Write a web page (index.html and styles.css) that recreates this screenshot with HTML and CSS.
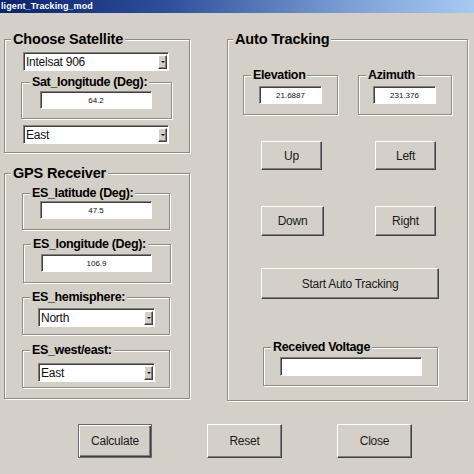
FILE: index.html
```html
<!DOCTYPE html>
<html>
<head>
<meta charset="utf-8">
<link rel="stylesheet" href="styles.css">
</head>
<body>
<div class="titlebar"><span class="title-text">ligent_Tracking_mod</span></div>
<div class="main">
  <div class="col-left">
    <fieldset class="group g-sat">
      <legend class="lg-big lg-left">Choose Satellite</legend>
      <div class="combo c-sat1"><span class="combo-text">Intelsat 906</span><span class="combo-btn"><i class="arrow"></i></span></div>
      <fieldset class="sub sub-satlon">
        <legend class="lg-sm lg-satlon">Sat_longitude (Deg):</legend>
        <div class="edit e-satlon">64.2</div>
      </fieldset>
      <div class="combo c-sat2"><span class="combo-text">East</span><span class="combo-btn"><i class="arrow"></i></span></div>
    </fieldset>
    <fieldset class="group g-gps">
      <legend class="lg-big lg-left">GPS Receiver</legend>
      <fieldset class="sub sub-lat">
        <legend class="lg-sm lg-es">ES_latitude (Deg):</legend>
        <div class="edit e-lat">47.5</div>
      </fieldset>
      <fieldset class="sub sub-lon">
        <legend class="lg-sm lg-es">ES_longitude (Deg):</legend>
        <div class="edit e-lon">106.9</div>
      </fieldset>
      <fieldset class="sub sub-hem">
        <legend class="lg-sm lg-es">ES_hemisphere:</legend>
        <div class="combo c-es c-hem"><span class="combo-text">North</span><span class="combo-btn"><i class="arrow"></i></span></div>
      </fieldset>
      <fieldset class="sub sub-we">
        <legend class="lg-sm lg-es">ES_west/east:</legend>
        <div class="combo c-es c-we"><span class="combo-text">East</span><span class="combo-btn"><i class="arrow"></i></span></div>
      </fieldset>
    </fieldset>
  </div>
  <div class="col-right">
    <fieldset class="group g-auto">
      <legend class="lg-big lg-auto">Auto Tracking</legend>
      <div class="ae-row">
        <fieldset class="sub sub-elev">
          <legend class="lg-sm lg-ae">Elevation</legend>
          <div class="edit e-ang e-elev">21.6887</div>
        </fieldset>
        <fieldset class="sub sub-azim">
          <legend class="lg-sm lg-ae">Azimuth</legend>
          <div class="edit e-ang e-azim">231.376</div>
        </fieldset>
      </div>
      <div class="btn-row row1">
        <div class="btn b-small">Up</div>
        <div class="btn b-small">Left</div>
      </div>
      <div class="btn-row row2">
        <div class="btn b-down">Down</div>
        <div class="btn b-small">Right</div>
      </div>
      <div class="btn b-start">Start Auto Tracking</div>
      <fieldset class="sub sub-volt">
        <legend class="lg-sm lg-ae">Received Voltage</legend>
        <div class="edit e-volt"></div>
      </fieldset>
    </fieldset>
  </div>
</div>
<div class="bottom">
  <div class="btn btn-default b-calc">Calculate</div>
  <div class="btn b-bottom">Reset</div>
  <div class="btn b-bottom">Close</div>
</div>
</body>
</html>
```

FILE: styles.css
```css
* { box-sizing: border-box; }
html, body { margin: 0; padding: 0; }
body {
  width: 474px;
  height: 474px;
  overflow: hidden;
  background: #d4d0c8;
  font-family: "Liberation Sans", Arial, sans-serif;
  color: #000;
}

.titlebar {
  height: 13px;
  background: linear-gradient(to right, #0a246a 0%, #2d4f9a 35%, #7ea2d8 75%, #a6caf0 100%);
  display: flex;
  align-items: center;
  padding-left: 1px;
}
.title-text {
  color: #fff;
  font-weight: bold;
  font-size: 9px;
  line-height: 13px;
  letter-spacing: 0.1px;
}

.main {
  display: flex;
  align-items: flex-start;
  gap: 37px;
  padding: 18px 0 0 4px;
}
.col-left { width: 186px; display: flex; flex-direction: column; }
.col-right { width: 241px; }

fieldset {
  margin: 0;
  padding: 0;
  min-width: 0;
  border: 1px solid #8e8b85;
  box-shadow: inset 1px 1px 0 #fff, 1px 1px 0 #fff;
  display: flex;
  flex-direction: column;
  align-items: flex-start;
}
legend {
  padding: 0 2px;
  background: #d4d0c8;
  font-weight: bold;
  color: #000;
}
.lg-big { font-size: 14.5px; line-height: 16px; letter-spacing: -0.17px; }
.lg-sm { font-size: 12.5px; line-height: 14px; letter-spacing: -0.35px; }
.lg-left { margin-left: 6px; }
.lg-satlon { margin-left: 8px; }
.lg-es { margin-left: 7px; }
.lg-auto { margin-left: 5px; }
.lg-ae { margin-left: 7px; }

/* edit boxes */
.edit {
  height: 18px;
  background: #fff;
  border: 1px solid;
  border-color: #808080 #fff #fff #808080;
  box-shadow: inset 1px 1px 0 #404040;
  display: flex;
  align-items: center;
  justify-content: center;
  font-size: 8px;
  color: #111;
}

/* combo boxes */
.combo {
  height: 19px;
  background: #fff;
  border: 1px solid;
  border-color: #808080 #fff #fff #808080;
  box-shadow: inset 1px 1px 0 #404040;
  display: flex;
  align-items: stretch;
  padding: 2px 1px 1px 2px;
}
.combo-text {
  flex: 1;
  font-size: 12px;
  line-height: 15px;
  letter-spacing: -0.25px;
  color: #111;
}
.combo-btn {
  width: 9px;
  background: #d4d0c8;
  border: 1px solid;
  border-color: #fff #404040 #404040 #fff;
  box-shadow: inset -1px -1px 0 #808080;
  display: flex;
  align-items: center;
  justify-content: center;
}
.arrow {
  display: block;
  width: 0;
  height: 0;
  border-left: 2px solid transparent;
  border-right: 2px solid transparent;
  border-top: 2px solid #000;
}

/* Choose Satellite */
.g-sat { width: 186px; padding-bottom: 8px; }
.c-sat1 { margin: 5px 0 0 18px; width: 146px; }
.sub-satlon { margin: 4px 0 0 16px; width: 151px; padding-bottom: 9px; }
.e-satlon { margin: 2px 0 0 18px; width: 112px; }
.c-sat2 { margin: 6px 0 0 18px; width: 146px; }

/* GPS Receiver */
.g-gps { width: 186px; margin-top: 12px; padding-bottom: 10px; }
.sub-lat { margin: 5px 0 0 17px; width: 148px; padding-bottom: 10px; }
.e-lat { margin: 1px 0 0 17px; width: 112px; }
.sub-lon { margin: 7px 0 0 18px; width: 148px; padding-bottom: 10px; }
.e-lon { margin: 3px 0 0 17px; width: 111px; }
.sub-hem { margin: 7px 0 0 17px; width: 148px; padding-bottom: 7px; }
.c-hem { margin: 4px 0 0 15px; }
.sub-we { margin: 8px 0 0 17px; width: 148px; padding-bottom: 5px; }
.c-we { margin: 6px 0 0 15px; }
.c-es { width: 117px; }

/* Auto Tracking */
.g-auto { width: 241px; padding-bottom: 14px; }
.ae-row { display: flex; gap: 20px; margin-top: 21px; padding-left: 15px; }
.sub-elev { width: 95px; padding-bottom: 10px; }
.sub-azim { width: 94px; padding-bottom: 10px; }
.e-ang { width: 63px; margin: 4px 0 0 15px; }
.e-azim { margin-left: 14px; }

.btn {
  display: flex;
  align-items: center;
  justify-content: center;
  font-size: 12px;
  letter-spacing: -0.25px;
  color: #1a1a1a;
  background: #d4d0c8;
  border: 1px solid;
  border-color: #fff #404040 #404040 #fff;
  box-shadow: inset -1px -1px 0 #808080;
}
.btn-row { display: flex; padding-left: 33px; }
.row1 { margin-top: 26px; gap: 53px; }
.row1 .btn { height: 29px; }
.row2 { margin-top: 36px; gap: 51px; }
.row2 .btn { height: 30px; }
.b-small { width: 61px; }
.b-down { width: 63px; }
.b-start { margin: 32px 0 0 33px; width: 178px; height: 31px; }
.sub-volt { margin: 41px 0 0 35px; width: 175px; padding-bottom: 9px; }
.e-volt { margin: 3px 0 0 16px; width: 142px; height: 19px; }

/* bottom buttons */
.bottom {
  display: flex;
  gap: 55px;
  padding-left: 78px;
  margin-top: 23px;
}
.b-calc { width: 74px; height: 34px; }
.b-bottom { width: 75px; height: 34px; }
.btn-default {
  border: 1px solid #6a6a6a;
  box-shadow: inset 1px 1px 0 #fff, inset -1px -1px 0 #404040, inset -2px -2px 0 #808080;
}
```
